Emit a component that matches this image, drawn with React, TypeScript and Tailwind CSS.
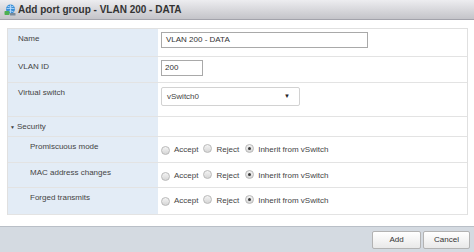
import React from "react";

const font = { fontFamily: '"Liberation Sans", Arial, sans-serif' };

const Radio = ({ checked }: { checked?: boolean }) => (
  <span className="relative inline-block h-[9px] w-[9px] rounded-full border border-[#b9b9b9] bg-gradient-to-b from-[#f4f4f4] to-[#d6d6d6]">
    {checked && (
      <span className="absolute left-[2px] top-[2px] h-[3px] w-[3px] rounded-full bg-[#3a3a3a]" />
    )}
  </span>
);

const RadioGroup = () => (
  <div className="flex items-center text-[8px] leading-[10px] text-[#444]">
    <Radio />
    <span className="ml-[4px]">Accept</span>
    <span className="ml-[5px]"><Radio /></span>
    <span className="ml-[4px]">Reject</span>
    <span className="ml-[6px]"><Radio checked /></span>
    <span className="ml-[4px]">Inherit from vSwitch</span>
  </div>
);

const Row = ({
  label,
  height,
  indent,
  children,
}: {
  label: React.ReactNode;
  height: string;
  indent?: boolean;
  children?: React.ReactNode;
}) => (
  <div className={`flex border-b border-[#e3e3e3] ${height}`}>
    <div
      className={`w-[150px] shrink-0 bg-[#e3ecf6] pt-[5px] text-[8px] leading-[10px] text-[#444] ${
        indent ? "pl-[22px]" : "pl-[10px]"
      }`}
    >
      {label}
    </div>
    <div className="flex-1 bg-white pl-[3px]">{children}</div>
  </div>
);

const NetIcon = () => (
  <svg width="12" height="12" viewBox="0 0 12 12">
    <circle cx="6.5" cy="5" r="4.5" fill="#3b8fd6" />
    <path d="M2.5 4.5h8M6.5 0.8v8.4M3.5 2.2q3 2 6 0M3.5 7.8q3-2 6 0" stroke="#bfe0ff" strokeWidth="0.8" fill="none" />
    <rect x="0.5" y="7" width="5" height="4" rx="0.8" fill="#4caf50" />
    <rect x="6" y="9" width="5.5" height="2.5" rx="0.6" fill="#7a8a99" />
  </svg>
);

export default function App() {
  return (
    <div className="flex h-[252px] w-[474px] flex-col bg-white" style={font}>
      <div className="flex h-[20px] shrink-0 items-center border-b border-[#a3a3ab] bg-gradient-to-b from-[#ededf0] to-[#c4c4c9] pl-[4px]">
        <NetIcon />
        <span className="ml-[2px] text-[10px] font-bold text-[#333]">
          Add port group - VLAN 200 - DATA
        </span>
      </div>

      <div className="flex-1 px-[7px] pt-[8px]">
        <div className="w-[461px] border border-[#e0e0e0] border-b-0">
          <Row label="Name" height="h-[28px]">
            <div className="mt-[3px] h-[16px] w-[207px] border border-[#a9a9a9] bg-white pl-[4px] text-[8px] leading-[14px] text-[#333]">
              VLAN 200 - DATA
            </div>
          </Row>
          <Row label="VLAN ID" height="h-[26px]">
            <div className="mt-[3px] h-[16px] w-[42px] border border-[#a9a9a9] bg-white pl-[3px] text-[8px] leading-[14px] text-[#333]">
              200
            </div>
          </Row>
          <Row label="Virtual switch" height="h-[34px]">
            <div className="mt-[4px] flex h-[19px] w-[139px] items-center justify-between rounded-[2px] border border-[#d2d2d2] bg-white pl-[5px] pr-[9px] text-[8px] text-[#444]">
              <span>vSwitch0</span>
              <span className="text-[6px] text-[#222]">▼</span>
            </div>
          </Row>
          <Row
            height="h-[20px]"
            label={
              <span className="flex items-center">
                <span className="-ml-[8px] mr-[2px] text-[5px] text-[#444]">▼</span>
                Security
              </span>
            }
          />
          <Row label="Promiscuous mode" height="h-[26px]" indent>
            <div className="pt-[7px]">
              <RadioGroup />
            </div>
          </Row>
          <Row label="MAC address changes" height="h-[25px]" indent>
            <div className="pt-[7px]">
              <RadioGroup />
            </div>
          </Row>
          <Row label="Forged transmits" height="h-[27px]" indent>
            <div className="pt-[7px]">
              <RadioGroup />
            </div>
          </Row>
        </div>
      </div>

      <div className="flex h-[26px] shrink-0 items-center justify-end gap-[2px] border-t border-[#b9bfc7] bg-[#d4dae1] pr-[4px]">
        <button className="h-[18px] w-[49px] rounded-[2px] border border-[#b3b3b3] bg-gradient-to-b from-white to-[#e9e9e9] text-[8px] text-[#333]">
          Add
        </button>
        <button className="h-[18px] w-[47px] rounded-[2px] border border-[#b3b3b3] bg-gradient-to-b from-white to-[#e9e9e9] text-[8px] text-[#333]">
          Cancel
        </button>
      </div>
    </div>
  );
}
